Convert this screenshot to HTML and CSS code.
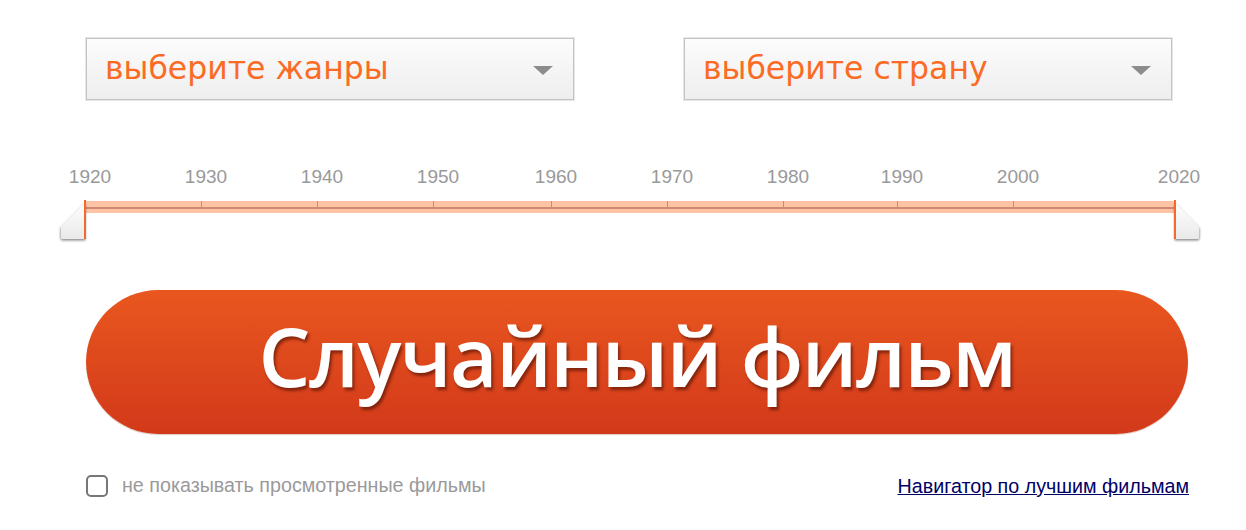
FILE: index.html
```html
<!DOCTYPE html>
<html lang="ru">
<head>
<meta charset="utf-8">
<title>Случайный фильм</title>
<link rel="stylesheet" href="styles.css">
</head>
<body>
<div class="wrap">
  <div class="selects">
    <div class="select"><span class="select-text">выберите жанры</span><span class="arrow"></span></div>
    <div class="select"><span class="select-text">выберите страну</span><span class="arrow"></span></div>
  </div>

  <div class="timeline">
    <div class="labels">
      <span class="label" style="left:0px">1920</span>
      <span class="label" style="left:116px">1930</span>
      <span class="label" style="left:232px">1940</span>
      <span class="label" style="left:348px">1950</span>
      <span class="label" style="left:466px">1960</span>
      <span class="label" style="left:582px">1970</span>
      <span class="label" style="left:698px">1980</span>
      <span class="label" style="left:812px">1990</span>
      <span class="label" style="left:928px">2000</span>
      <span class="label" style="left:1089px">2020</span>
    </div>
    <div class="track">
      <span class="tick" style="left:116px"></span>
      <span class="tick" style="left:232px"></span>
      <span class="tick" style="left:348px"></span>
      <span class="tick" style="left:466px"></span>
      <span class="tick" style="left:582px"></span>
      <span class="tick" style="left:698px"></span>
      <span class="tick" style="left:812px"></span>
      <span class="tick" style="left:928px"></span>
      <div class="handle handle-left">
        <svg width="30" height="44" viewBox="0 0 30 44">
          <defs>
            <linearGradient id="hg1" x1="0" y1="0" x2="0" y2="1">
              <stop offset="0" stop-color="#ffffff"/>
              <stop offset="1" stop-color="#e9e9e9"/>
            </linearGradient>
            <filter id="hs1" x="-30%" y="-30%" width="160%" height="160%">
              <feDropShadow dx="-0.5" dy="1.5" stdDeviation="1.2" flood-color="#000" flood-opacity="0.45"/>
            </filter>
          </defs>
          <path d="M28 2 L28 39 L5.5 39 Q3 39 3 36.5 L3 27 Z" fill="url(#hg1)" filter="url(#hs1)"/>
          <rect x="26" y="0" width="2" height="39" fill="#f36a2a"/>
        </svg>
      </div>
      <div class="handle handle-right">
        <svg width="30" height="44" viewBox="0 0 30 44">
          <defs>
            <linearGradient id="hg2" x1="0" y1="0" x2="0" y2="1">
              <stop offset="0" stop-color="#ffffff"/>
              <stop offset="1" stop-color="#e9e9e9"/>
            </linearGradient>
            <filter id="hs2" x="-30%" y="-30%" width="160%" height="160%">
              <feDropShadow dx="0.5" dy="1.5" stdDeviation="1.2" flood-color="#000" flood-opacity="0.45"/>
            </filter>
          </defs>
          <path d="M2 2 L2 39 L24.5 39 Q27 39 27 36.5 L27 27 Z" fill="url(#hg2)" filter="url(#hs2)"/>
          <rect x="2" y="0" width="2" height="39" fill="#f36a2a"/>
        </svg>
      </div>
    </div>
  </div>

  <button class="random-btn" type="button">Случайный фильм</button>

  <div class="bottom">
    <label class="check"><span class="box"></span><span class="check-text">не показывать просмотренные фильмы</span></label>
    <a class="nav-link" href="#">Навигатор по лучшим фильмам</a>
  </div>
</div>
</body>
</html>
```

FILE: styles.css
```css
html, body {
  margin: 0;
  padding: 0;
  background: #ffffff;
}

body {
  font-family: "Liberation Sans", Arial, sans-serif;
}

.wrap {
  width: 1102px;
  padding: 38px 0 0 86px;
}

.selects {
  display: flex;
  gap: 110px;
}

.select {
  box-sizing: border-box;
  width: 488px;
  height: 62px;
  border: 1px solid #c4c4c4;
  box-shadow: 0 0 0 1px #e6e6e6;
  background: linear-gradient(#fcfcfc, #eeeeee);
  display: flex;
  align-items: center;
  justify-content: space-between;
  padding: 0 20px 0 18px;
}

.select-text {
  font-family: "DejaVu Sans", sans-serif;
  font-size: 31.5px;
  color: #fb6b24;
  letter-spacing: 0;
  margin-top: -3px;
}

.arrow {
  width: 0;
  height: 0;
  border-left: 10px solid transparent;
  border-right: 10px solid transparent;
  border-top: 9px solid #8c8c8c;
  margin-top: 2px;
}

.timeline {
  position: relative;
  width: 1089px;
  height: 76px;
  margin: 66px 0 0 -1px;
}

.labels {
  position: relative;
  height: 22px;
}

.label {
  position: absolute;
  top: 0;
  width: 60px;
  margin-left: -25px;
  text-align: center;
  font-size: 19px;
  line-height: 22px;
  color: #999999;
}

.track {
  position: absolute;
  left: 0;
  top: 35px;
  width: 1089px;
  height: 12px;
  background: #ffc2a5;
}

.track::after {
  content: "";
  position: absolute;
  left: 0;
  right: 0;
  top: 6px;
  height: 2px;
  background: #cc8a70;
}

.tick {
  position: absolute;
  top: 0;
  width: 1px;
  height: 7px;
  background: #cc8a70;
}

.handle {
  position: absolute;
  top: -1px;
  width: 30px;
  height: 44px;
  z-index: 2;
}

.handle svg {
  display: block;
}

.handle-left {
  left: -27px;
}

.handle-right {
  left: 1087px;
}

.random-btn {
  display: flex;
  align-items: center;
  justify-content: center;
  box-sizing: border-box;
  width: 1102px;
  height: 144px;
  margin-top: 48px;
  padding: 0 0 14px 0;
  border: none;
  border-radius: 72px;
  background: linear-gradient(#e9571f, #d2391a);
  box-shadow: 0 1px 1px rgba(120, 40, 10, 0.25);
  font-family: "Open Sans", sans-serif;
  font-weight: 600;
  font-size: 82px;
  line-height: 85px;
  color: #ffffff;
  letter-spacing: -1.5px;
  text-shadow: 2px 3px 3px rgba(60, 10, 0, 0.55);
  cursor: pointer;
}

.bottom {
  display: flex;
  justify-content: space-between;
  align-items: center;
  margin-top: 41px;
  height: 22px;
}

.check {
  display: flex;
  align-items: center;
  gap: 14px;
}

.box {
  box-sizing: border-box;
  width: 22px;
  height: 22px;
  border: 2px solid #777777;
  border-radius: 5px;
  background: #ffffff;
}

.check-text {
  font-size: 19.7px;
  color: #9a9a9a;
  margin-top: -1px;
}

.nav-link {
  font-size: 19.7px;
  color: #000066;
  text-decoration: underline;
  margin-right: -1px;
}
```
